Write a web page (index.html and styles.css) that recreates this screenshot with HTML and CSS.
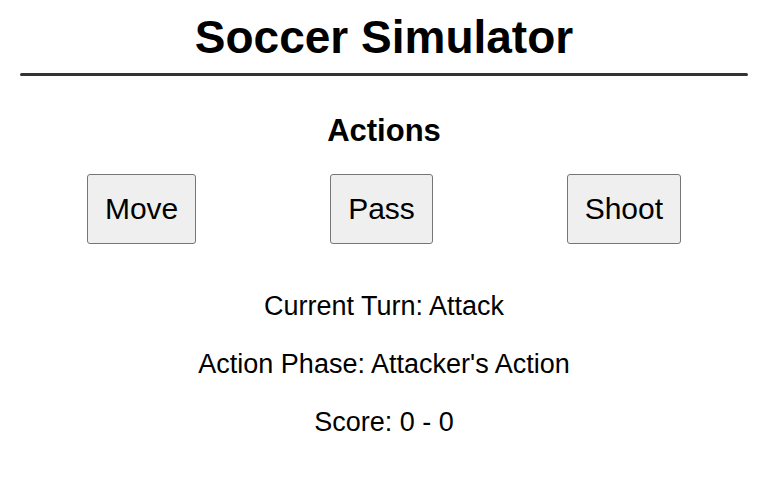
FILE: index.html
```html
<!DOCTYPE html>
<html lang="en">
<head>
    <meta charset="UTF-8">
    <meta name="viewport" content="width=device-width, initial-scale=1.0">
    <title>Soccer Simulator</title>
    <link rel="stylesheet" href="styles.css">
</head>
<body>
    <h1>Soccer Simulator</h1>
    <hr class="divider">
    <div class="actions">
        <h2>Actions</h2>
        <div class="buttons">
            <button id="move">Move</button>
            <button id="pass">Pass</button>
            <button id="shoot">Shoot</button>
        </div>
    </div>
    <div class="status">
        <p>Current Turn: <span id="turn">Attack</span></p>
        <p>Action Phase: <span id="phase">Attacker's Action</span></p>
        <p>Score: <span id="score">0 - 0</span></p>
    </div>
</body>
</html>
```

FILE: styles.css
```css
body {
    font-family: "Liberation Sans", Arial, sans-serif;
    margin: 0;
    padding: 0 20px;
    text-align: center;
    color: #000;
    background: #fff;
}
h1 {
    font-size: 46px;
    margin: 10px 0 9px;
}
.divider {
    border: none;
    border-top: 3px solid #333;
    border-radius: 2px;
    margin: 0;
}
.actions h2 {
    font-size: 31px;
    margin: 37px 0 25px;
}
.buttons {
    display: flex;
    justify-content: space-around;
    margin-bottom: 47px;
}
.buttons button {
    font-family: "Liberation Sans", Arial, sans-serif;
    font-size: 30px;
    padding: 17px 17px;
    background-color: #efefef;
    border: 1px solid #767676;
    border-radius: 3px;
    color: #000;
}
.status p {
    font-size: 27px;
    margin: 27px 0 26px;
}
```
